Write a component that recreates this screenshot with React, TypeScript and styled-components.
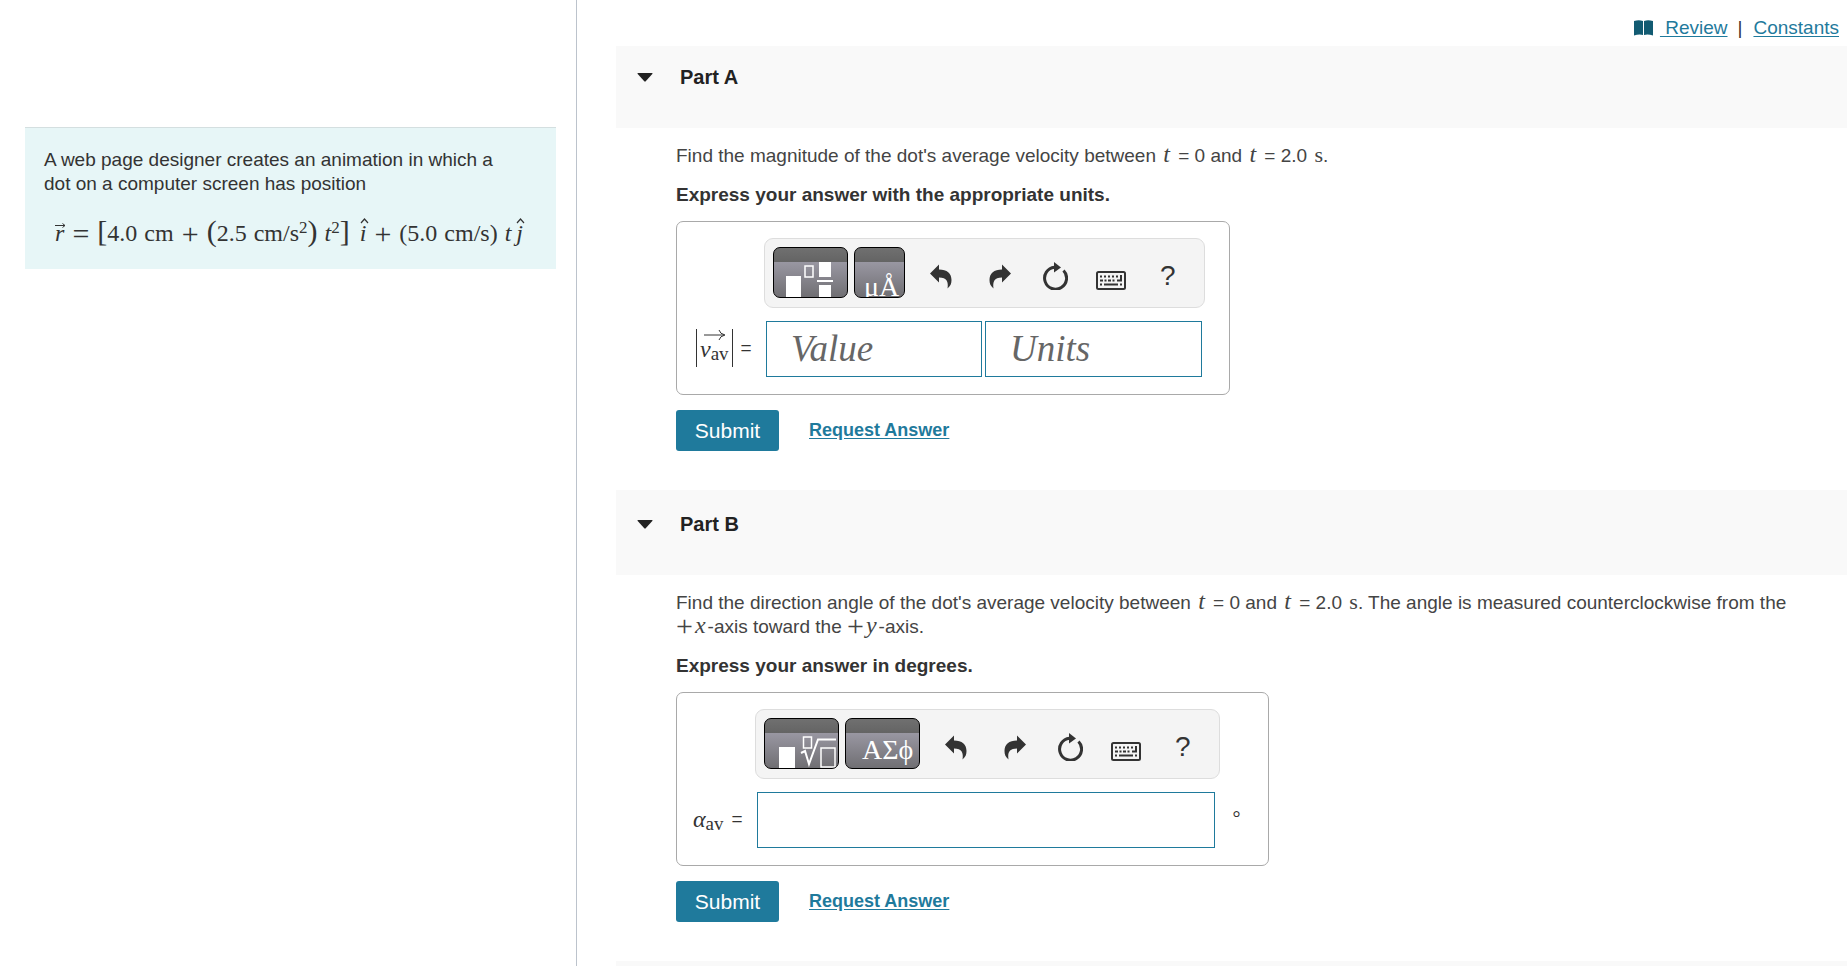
import React from "react";
import styled, { createGlobalStyle } from "styled-components";

const sans = `"Liberation Sans", Arial, sans-serif`;
const serif = `"Liberation Serif", "Times New Roman", serif`;
const teal = "#1f7a9c";

const Global = createGlobalStyle`
  *, *::before, *::after { box-sizing: border-box; }
  body { margin: 0; background: #fff; color: #333; font-family: ${sans}; font-size: 19px; line-height: 24px; }
  a { color: ${teal}; text-decoration: underline; text-underline-offset: 2px; }
`;

const Page = styled.div`
  display: flex;
  min-height: 100vh;
`;

const ProblemPane = styled.aside`
  flex: 0 0 577px;
  padding: 127px 20px 0 25px;
  border-right: 1px solid #bcc3cc;
`;

const ProblemCard = styled.section`
  min-height: 142px;
  padding: 20px 19px;
  background: #e7f6f7;
  border-top: 1px solid #d4dfe0;
`;

const ProblemText = styled.p`
  margin: 0;
  padding-right: 24px;
`;

const Equation = styled.div`
  display: flex;
  align-items: baseline;
  margin: 22px 0 0 11px;
  font: 24px/30px ${serif};
  white-space: nowrap;
`;

const Term = styled.span<{ $gap?: number; $italic?: boolean }>`
  position: relative;
  margin-left: ${(p) => p.$gap ?? 0}px;
  font-style: ${(p) => (p.$italic ? "italic" : "normal")};
`;

const Operator = styled.span`
  align-self: flex-end;
  width: 33px;
  font-size: 30px;
  text-align: center;
  line-height: 28px;
`;

const Fence = styled.span`
  font-size: 30px;
  line-height: 24px;
`;

const Power = styled.sup`
  font-size: 17px;
  line-height: 0;
  vertical-align: 8px;
  font-style: normal;
`;

const Accent = styled.svg<{ $top: number }>`
  position: absolute;
  left: 0;
  top: ${(p) => p.$top}px;
  fill: none;
  stroke: #333;
`;

const WorkPane = styled.main`
  flex: 1;
  min-width: 0;
  height: 100vh;
  padding-left: 39px;
  overflow: hidden;
`;

const Resources = styled.nav`
  display: flex;
  align-items: center;
  justify-content: flex-end;
  height: 46px;
  padding: 10px 8px 0 0;
`;

const ReviewLink = styled.a`
  margin-left: 7px;
`;

const Divider = styled.span`
  margin: 0 11px 0 10px;
`;

const PartHeader = styled.header<{ $lead: number }>`
  display: flex;
  align-items: flex-start;
  gap: 27px;
  padding: ${(p) => p.$lead}px 20px 39px;
  background: #f9f9f9;
`;

const PartTitle = styled.h2`
  margin: 0;
  color: #222;
  font-size: 20px;
  line-height: 24px;
`;

const Toggle = styled.button`
  display: flex;
  width: 17px;
  height: 24px;
  padding: 0;
  align-items: center;
  justify-content: center;
  border: 0;
  background: none;
`;

const PartBody = styled.div`
  padding: 16px 24px 39px 60px;
`;

const Prompt = styled.p`
  margin: 0 0 15px;
  color: #444;
`;

const Instruction = styled.p`
  margin: 0 0 14px;
  font-weight: bold;
`;

const NoBreak = styled.span`
  white-space: nowrap;
`;

const MathVar = styled.i<{ $spaced?: boolean }>`
  margin: ${(p) => (p.$spaced ? "0 3px 0 2px" : "0 2px")};
  font: italic 24px/0 ${serif};
`;

const MathText = styled.span`
  margin-left: 2px;
  font: 22px/0 ${serif};
`;

const MathPlus = styled.span`
  font: 30px/0 ${serif};
  vertical-align: -3px;
`;

const AnswerBox = styled.div<{ $inset: number; $right: number }>`
  display: grid;
  grid-template-columns: ${(p) => p.$inset}px max-content ${(p) => p.$right}px;
  align-content: start;
  row-gap: 13px;
  width: max-content;
  padding: 16px 0 17px;
  border: 1px solid #a9a9a9;
  border-radius: 7px;
`;

const Toolbar = styled.div`
  grid-column: 2;
  display: flex;
  align-items: flex-start;
  width: max-content;
  height: 70px;
  margin-left: -2px;
  padding: 8px 8px 0;
  border: 1px solid #ddd;
  border-radius: 9px;
  background: #f4f4f4;
`;

const PaletteButton = styled.button<{ $width: number }>`
  display: flex;
  align-items: flex-start;
  width: ${(p) => p.$width}px;
  height: 51px;
  margin-right: 6px;
  padding: 0;
  overflow: hidden;
  border: 1px solid #000;
  border-radius: 7px;
  background: linear-gradient(#707070, #646464 14px, #9997a2 14px, #706f73);
  color: #fff;
  svg { flex: none; }
`;

const IconRow = styled.div`
  display: flex;
  align-items: center;
  height: 58px;
  margin: 0 20px 0 19px;
`;

const IconButton = styled.button<{ $gap?: number }>`
  display: flex;
  margin: 0 0 0 ${(p) => p.$gap ?? 0}px;
  padding: 0;
  border: 0;
  background: none;
  color: #333;
  font: 28px/30px ${sans};
`;

const Fields = styled.div`
  grid-column: 2;
  display: flex;
  gap: 3px;
`;

const Field = styled.input<{ $width: number }>`
  width: ${(p) => p.$width}px;
  height: 56px;
  padding: 0 24px 2px;
  border: 1px solid ${teal};
  border-radius: 0;
  outline: 0;
  background: #fff;
  font: italic 37px/50px ${serif};
  &::placeholder { color: #666; opacity: 1; }
`;

const FieldLabel = styled.label`
  grid-column: 1;
  display: flex;
  align-items: center;
  height: 56px;
  padding: 0 0 2px 16px;
`;

const Symbol = styled.span`
  position: relative;
  font: italic 24px/24px ${serif};
`;

const Magnitude = styled(Symbol)`
  height: 38px;
  margin-left: 3px;
  padding: 8px 3px 0;
  border: solid #333;
  border-width: 0 1px;
`;

const Subscript = styled.sub`
  font-size: 19px;
  font-style: normal;
  line-height: 0;
  vertical-align: -3px;
`;

const Equals = styled.span`
  margin-left: 8px;
`;

const Unit = styled.span`
  grid-column: 3;
  padding: 11px 0 0 13px;
  font: 20px/30px ${serif};
`;

const Actions = styled.div`
  display: flex;
  align-items: center;
  gap: 30px;
  margin-top: 15px;
`;

const Submit = styled.button`
  width: 103px;
  height: 41px;
  border: 0;
  border-radius: 3px;
  background: ${teal};
  color: #fff;
  font: 21px/24px ${sans};
`;

const RequestLink = styled.a`
  padding-bottom: 2px;
  font-size: 18px;
  font-weight: bold;
`;

const UndoGlyph = ({ flip }: { flip?: boolean }) => (
  <svg width="22" height="25" viewBox="0 0 22 25" fill="#333">
    <path transform={flip ? "matrix(-1 0 0 1 22 0)" : undefined} d="M0 9.500L9 0.500V5.500C17 5.500 21.500 9.500 21.500 16C21.500 19.500 20.500 22 17.500 24.500C18.500 18 17 13.500 9 13.500V18.500Z" />
  </svg>
);

const ResetGlyph = () => (
  <svg width="26" height="28" viewBox="0 0 26 28">
    <path d="M12.500 5.200A11 11 0 1 0 21.500 8.500" fill="none" stroke="#333" strokeWidth="3" />
    <path d="M12 0L19 5.500L12 10.500Z" fill="#333" />
  </svg>
);

const KeyboardGlyph = () => (
  <svg width="30" height="27" viewBox="0 -8 30 27">
    <rect x="1" y="1" width="28" height="17" rx="1.500" fill="none" stroke="#333" strokeWidth="2" />
    <g stroke="#333" strokeWidth="2">
      <path d="M4 5.500H23" strokeDasharray="2 2" />
      <path d="M4 9.500H20" strokeDasharray="3 1.500 2 1.500" />
      <path d="M4 13.500H6M8 13.500H22M24 13.500H26" />
      <path d="M25 4V9.500H21" fill="none" />
    </g>
  </svg>
);

const BookGlyph = () => (
  <svg width="19" height="16" viewBox="0 0 19 16">
    <path d="M0 1Q5 -0.500 9 1V15Q5 14 0 15.500ZM10 1Q14 -0.500 19 1V15.500Q14 14 10 15Z" fill="#125b72" />
  </svg>
);

const TemplateGlyph = () => (
  <svg width="73" height="49" viewBox="0 0 73 49" fill="#fff">
    <path d="M12 28h15v21H12zM45 14h12v15H45zM45 37h12v12H45zM43 32h16v2H43z" />
    <rect x="31" y="18" width="8" height="11" fill="none" stroke="#fff" strokeWidth="1.500" />
  </svg>
);

const RootGlyph = () => (
  <svg width="73" height="49" viewBox="0 0 73 49" fill="none" stroke="#fff">
    <path d="M14 28h16v21H14z" fill="#fff" stroke="none" />
    <path d="M38.500 18h8v11h-8zM56 29h14v19H56z" strokeWidth="1.500" />
    <path d="M36 34L40 32L44 45L53 20.500H71" strokeWidth="2" />
  </svg>
);

const PaletteText = styled.span<{ $drop: number; $left: number }>`
  flex: none;
  padding: ${(p) => p.$drop}px 0 0 ${(p) => p.$left}px;
  font: 28px/32px ${serif};
`;

const Tools = () => (
  <IconRow>
    <IconButton aria-label="Undo"><UndoGlyph /></IconButton>
    <IconButton aria-label="Redo" $gap={37}><UndoGlyph flip /></IconButton>
    <IconButton aria-label="Reset" $gap={31}><ResetGlyph /></IconButton>
    <IconButton aria-label="Keyboard shortcuts" $gap={28}><KeyboardGlyph /></IconButton>
    <IconButton aria-label="Help" $gap={34}>?</IconButton>
  </IconRow>
);

const Part = ({ title, lead, children }: { title: string; lead: number; children: React.ReactNode }) => (
  <section>
    <PartHeader $lead={lead}>
      <Toggle aria-label={`Collapse ${title}`}>
        <svg width="16" height="9" viewBox="0 0 16 9"><path d="M1 0H15Q16 0 15.300 1L8.700 8.300Q8 9 7.300 8.300L0.700 1Q0 0 1 0Z" fill="#222" /></svg>
      </Toggle>
      <PartTitle>{title}</PartTitle>
    </PartHeader>
    <PartBody>{children}</PartBody>
  </section>
);

const SubmitRow = () => (
  <Actions>
    <Submit>Submit</Submit>
    <RequestLink href="#request">Request Answer</RequestLink>
  </Actions>
);

const Hat = () => (
  <Accent $top={0} width="9" height="6" viewBox="0 0 9 6"><path d="M1 5L4.500 1L8 5" strokeWidth="1.200" /></Accent>
);

export default function App() {
  return (
    <>
      <Global />
      <Page>
        <ProblemPane>
          <ProblemCard>
            <ProblemText>A web page designer creates an animation in which a dot on a computer screen has position</ProblemText>
            <Equation>
              <Term $italic>r<Accent $top={4} width="11" height="7" viewBox="0 0 11 7"><path d="M0 3.500H10M7.500 1.500L10 3.500L7.500 5.500" /></Accent></Term>
              <Operator>=</Operator>
              <Fence>[</Fence>
              <Term>4.0</Term><Term $gap={7}>cm</Term>
              <Operator>+</Operator>
              <Fence>(</Fence>
              <Term>2.5</Term><Term $gap={7}>cm/s<Power>2</Power></Term>
              <Fence>)</Fence>
              <Term $gap={7} $italic>t<Power>2</Power></Term>
              <Fence>]</Fence>
              <Term $gap={10} $italic>i<Hat /></Term>
              <Operator>+</Operator>
              <Term>(5.0</Term><Term $gap={7}>cm/s)</Term>
              <Term $gap={7} $italic>t</Term>
              <Term $gap={5} $italic>j<Hat /></Term>
            </Equation>
          </ProblemCard>
        </ProblemPane>
        <WorkPane>
          <Resources>
            <BookGlyph />
            <ReviewLink href="#review">&nbsp;Review</ReviewLink>
            <Divider>|</Divider>
            <a href="#constants">Constants</a>
          </Resources>
          <Part title="Part A" lead={19}>
            <Prompt>Find the magnitude of the dot's average velocity between <MathVar $spaced>t</MathVar> = 0 and <MathVar $spaced>t</MathVar> = 2.0 <MathText>s</MathText>.</Prompt>
            <Instruction>Express your answer with the appropriate units.</Instruction>
            <AnswerBox $inset={89} $right={24}>
              <Toolbar>
                <PaletteButton $width={75} aria-label="Templates"><TemplateGlyph /></PaletteButton>
                <PaletteButton $width={51} aria-label="Unit symbols"><PaletteText $drop={23} $left={9}>μÅ</PaletteText></PaletteButton>
                <Tools />
              </Toolbar>
              <FieldLabel htmlFor="value">
                <Magnitude>v<Subscript>av</Subscript>
                  <Accent $top={0} width="34" height="12" viewBox="0 0 34 12"><path d="M7 6H27M22 1Q23 5 28 6Q23 7 22 11" /></Accent>
                </Magnitude>
                <Equals>=</Equals>
              </FieldLabel>
              <Fields>
                <Field id="value" $width={216} placeholder="Value" />
                <Field aria-label="Units" $width={217} placeholder="Units" />
              </Fields>
            </AnswerBox>
            <SubmitRow />
          </Part>
          <Part title="Part B" lead={22}>
            <Prompt>Find the direction angle of the dot's average velocity between <MathVar $spaced>t</MathVar> = 0 and <MathVar $spaced>t</MathVar> = 2.0 <MathText>s</MathText>. The angle is measured counterclockwise from the <NoBreak><MathPlus>+</MathPlus><MathVar>x</MathVar>-axis</NoBreak> toward the <NoBreak><MathPlus>+</MathPlus><MathVar>y</MathVar>-axis.</NoBreak></Prompt>
            <Instruction>Express your answer in degrees.</Instruction>
            <AnswerBox $inset={80} $right={48}>
              <Toolbar>
                <PaletteButton $width={75} aria-label="Templates"><RootGlyph /></PaletteButton>
                <PaletteButton $width={75} aria-label="Greek letters"><PaletteText $drop={15} $left={16}>ΑΣϕ</PaletteText></PaletteButton>
                <Tools />
              </Toolbar>
              <FieldLabel htmlFor="angle">
                <Symbol>α<Subscript>av</Subscript></Symbol>
                <Equals>=</Equals>
              </FieldLabel>
              <Fields>
                <Field id="angle" $width={458} />
              </Fields>
              <Unit>°</Unit>
            </AnswerBox>
            <SubmitRow />
          </Part>
          <PartHeader $lead={22} />
        </WorkPane>
      </Page>
    </>
  );
}
